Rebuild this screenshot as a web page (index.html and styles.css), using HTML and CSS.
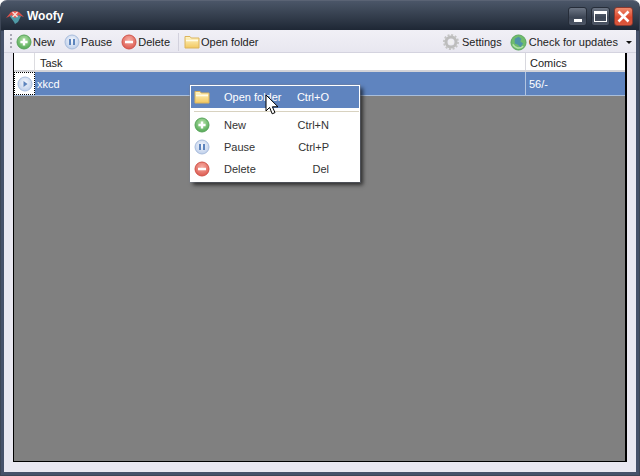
FILE: index.html
```html
<!DOCTYPE html>
<html>
<head>
<meta charset="utf-8">
<title>Woofy</title>
<link rel="stylesheet" href="styles.css">
</head>
<body>
<svg class="defs" width="0" height="0">
  <defs>
    <radialGradient id="gGreen" cx="50%" cy="35%" r="65%"><stop offset="0" stop-color="#b4e2a8"/><stop offset="1" stop-color="#52a854"/></radialGradient>
    <radialGradient id="gRed" cx="50%" cy="35%" r="65%"><stop offset="0" stop-color="#f7aea4"/><stop offset="1" stop-color="#dc5a50"/></radialGradient>
    <radialGradient id="gBlue" cx="50%" cy="40%" r="65%"><stop offset="0" stop-color="#f6f8fd"/><stop offset="1" stop-color="#b9cbe8"/></radialGradient>
    <linearGradient id="gFolder" x1="0" y1="0" x2="0" y2="1"><stop offset="0" stop-color="#fff6c8"/><stop offset="1" stop-color="#f2c860"/></linearGradient>
    <symbol id="new" viewBox="0 0 16 16"><circle cx="8" cy="8" r="7" fill="url(#gGreen)" stroke="#5aa55c"/><path d="M8 4.4v7.2M4.4 8h7.2" stroke="#fff" stroke-width="2.4"/></symbol>
    <symbol id="pause" viewBox="0 0 16 16"><circle cx="8" cy="8" r="7" fill="url(#gBlue)" stroke="#a8bcdc"/><path d="M6 5v6M10 5v6" stroke="#5d84bd" stroke-width="2"/></symbol>
    <symbol id="delete" viewBox="0 0 16 16"><circle cx="8" cy="8" r="7" fill="url(#gRed)" stroke="#d0544a"/><path d="M4 8h8" stroke="#fff" stroke-width="2.6"/></symbol>
    <symbol id="folder" viewBox="0 0 16 16"><path d="M1 2.5h5l1.2 1.5H15v10H1z" fill="url(#gFolder)" stroke="#dcb45c"/><path d="M2 6.5h12" stroke="#fffbe6" stroke-width="1.4"/></symbol>
  </defs>
</svg>
<div class="window">
  <header class="titlebar">
    <svg class="logo" width="18" height="17" viewBox="0 0 18 17">
      <path d="M3 7l5 7 1 2 3-2 3-6-6-2z" fill="#4f9aa6"/>
      <path d="M0 10l6-3 3 3 3-3 6 2-5-5-4-1-4 1z" fill="#d9504a"/>
      <circle cx="9" cy="6.5" r="3" fill="#e8615a"/>
      <path d="M6.5 4l5 5M11.5 4l-5 5" stroke="#f6e6e0" stroke-width="1.1"/>
    </svg>
    <span class="title">Woofy</span>
    <div class="caption">
      <span class="capbtn"><i class="min"></i></span>
      <span class="capbtn"><i class="max"></i></span>
      <span class="capbtn close"><svg width="13" height="13" viewBox="0 0 13 13"><path d="M1.5 1.5l10 10M11.5 1.5l-10 10" stroke="#fff" stroke-width="2.6"/></svg></span>
    </div>
  </header>
  <div class="client">
    <nav class="toolbar">
      <span class="grip"></span>
      <span class="tool t-new"><svg class="ico"><use href="#new"/></svg>New</span>
      <span class="tool t-pause"><svg class="ico"><use href="#pause"/></svg>Pause</span>
      <span class="tool t-del"><svg class="ico"><use href="#delete"/></svg>Delete</span>
      <span class="sep"></span>
      <span class="tool t-folder"><svg class="ico"><use href="#folder"/></svg>Open folder</span>
      <span class="spring"></span>
      <span class="tool t-set">
        <svg class="ico" viewBox="0 0 16 16"><circle cx="8" cy="8" r="5" fill="none" stroke="#bdbdbd" stroke-width="3"/><circle cx="8" cy="8" r="7" fill="none" stroke="#c4c4c4" stroke-width="2" stroke-dasharray="2 1.66"/><circle cx="8" cy="8" r="2.2" fill="#f0f0f0"/></svg>Settings</span>
      <span class="tool t-upd">
        <svg class="ico globe" viewBox="0 0 18 18"><circle cx="9" cy="9" r="8" fill="#6fbc6c" stroke="#5aa55c"/><path d="M5 5l4-2 3 2-1 3 3 2-3 4-3-3-3-1z" fill="#4f93a8"/><path d="M3 11a7 7 0 0 0 11 2" fill="none" stroke="#b4e2a8" stroke-width="1.6"/></svg>Check for updates</span>
      <span class="arrow"></span>
    </nav>
    <main class="grid">
      <div class="head">
        <span class="c-ico"></span>
        <span class="c-task">Task</span>
        <span class="c-comics">Comics</span>
      </div>
      <div class="row">
        <span class="c-ico focus"><svg width="16" height="16" viewBox="0 0 16 16"><circle cx="8" cy="8" r="7" fill="url(#gBlue)" stroke="#a9bedf"/><path d="M6.5 5l4 3-4 3z" fill="#5d84bd"/></svg></span>
        <span class="c-task">xkcd</span>
        <span class="c-comics">56/-</span>
      </div>
    </main>
  </div>
  <div class="menu">
    <div class="item active"><svg class="mico"><use href="#folder"/></svg><span class="label">Open folder</span><span class="key">Ctrl+O</span></div>
    <div class="rule"></div>
    <div class="item"><svg class="mico"><use href="#new"/></svg><span class="label">New</span><span class="key">Ctrl+N</span></div>
    <div class="item"><svg class="mico"><use href="#pause"/></svg><span class="label">Pause</span><span class="key">Ctrl+P</span></div>
    <div class="item"><svg class="mico"><use href="#delete"/></svg><span class="label">Delete</span><span class="key">Del</span></div>
  </div>
  <svg class="cursor" width="14" height="21" viewBox="0 0 14 21"><path d="M1 1v16l3.6-3.6 2.6 6.4 2.8-1.2-2.6-5.8H13z" fill="#fff" stroke="#000"/></svg>
</div>
</body>
</html>
```
FILE: styles.css
```css
html, body { margin: 0; padding: 0; background: #fff; }
.defs { position: absolute; }
.window {
  position: relative;
  width: 640px;
  height: 476px;
  box-sizing: border-box;
  display: flex;
  flex-direction: column;
  overflow: hidden;
  border-radius: 7px 7px 0 0;
  border: 1px solid #3d4656;
  border-top-color: #5a6374;
  padding: 0 3px 3px;
  background: linear-gradient(#4b5668 0, #36404f 14px, #1e2735 29px, #46526a 30px, #46526a 100%);
  font: 11px "Liberation Sans", Arial, sans-serif;
  color: #222;
}
.titlebar {
  height: 29px;
  flex: none;
  display: flex;
  align-items: center;
  gap: 3px;
}
.logo { margin-left: 2px; margin-top: 1px; }
.title { color: #fff; font-weight: bold; font-size: 12px; }
.caption { margin-left: auto; display: flex; gap: 4px; margin-top: 2px; margin-right: 3px; }
.capbtn {
  width: 19px;
  height: 19px;
  box-sizing: border-box;
  border: 1px solid #262d39;
  border-radius: 3px;
  background: linear-gradient(#6c7584, #3d4655 55%, #4e5767);
  display: flex;
  align-items: center;
  justify-content: center;
}
.capbtn i { display: block; box-sizing: border-box; }
.min { width: 8px; height: 3px; background: #fff; margin-top: 7px; }
.max { width: 13px; height: 11px; border: 1px solid #fff; border-top-width: 3px; }
.close { background: linear-gradient(#f08a6c, #dc4a30 55%, #d9583e); border-color: #8a3a30; }
.client {
  flex: 1;
  display: flex;
  flex-direction: column;
  background: #e9e8f1;
  padding: 0 9px 10px;
  min-height: 0;
}
.toolbar {
  height: 23px;
  flex: none;
  margin: 0 -9px;
  padding: 2px 0 0 6px;
  display: flex;
  align-items: center;
  background: linear-gradient(#f1f0f6, #e8e7f0);
  border-bottom: 1px solid #d4d3df;
  box-sizing: border-box;
}
.grip {
  width: 2px;
  height: 16px;
  margin-right: 4px;
  background: repeating-linear-gradient(#a8a8b4 0 2px, transparent 2px 4px);
}
.tool { display: flex; align-items: center; gap: 1px; white-space: nowrap; }
.ico { width: 16px; height: 16px; }
.globe { width: 17px; height: 17px; }
.t-pause, .t-del { margin-left: 9px; }
.sep { width: 1px; height: 18px; background: #d2d1dd; margin: 0 5px 0 8px; }
.spring { flex: 1; }
.t-set { gap: 3px; }
.t-upd { margin-left: 8px; gap: 2px; }
.arrow {
  width: 0; height: 0;
  border: 3px solid transparent;
  border-top: 3px solid #111;
  border-bottom: 0;
  margin: 0 4px 0 8px;
}
.grid {
  flex: 1;
  background: #808080;
  border: 1px solid #000;
  border-top: 0;
  border-right: 2px solid #000;
  min-height: 0;
}
.head {
  height: 19px;
  box-sizing: border-box;
  display: flex;
  background: #fff;
  border-bottom: 2px solid #d3d3d8;
  line-height: 21px;
}
.c-ico { width: 21px; flex: none; box-sizing: border-box; }
.head .c-ico { border-right: 1px solid #dcdce0; }
.c-task { flex: 1; padding-left: 5px; }
.c-comics { width: 100px; flex: none; border-left: 1px solid #d8d8de; padding-left: 4px; box-sizing: border-box; }
.row {
  height: 24px;
  display: flex;
  align-items: center;
  background: #5f84bf;
  color: #fff;
  border-bottom: 1px solid #a9bedb;
  box-sizing: border-box;
}
.row .c-task { padding-left: 2px; }
.row .c-comics { align-self: stretch; display: flex; align-items: center; border-left-color: #b3c5e0; padding-left: 3px; }
.focus {
  align-self: stretch;
  display: flex;
  align-items: center;
  justify-content: center;
  background: #fff;
  outline: 1px dotted #000;
  outline-offset: -1px;
}
.menu {
  position: absolute;
  left: 189px;
  top: 84px;
  width: 170px;
  height: 97px;
  box-sizing: border-box;
  background: #fff;
  border: 1px solid #fff;
  box-shadow: 0 0 0 1px rgba(120,130,150,.35), 3px 3px 4px rgba(0,0,0,.65);
  color: #333;
}
.item {
  height: 22px;
  display: flex;
  align-items: center;
  padding-left: 3px;
  position: relative;
}
.item.active { background: #5f84bf; color: #fff; }
.mico { width: 16px; height: 16px; }
.label { margin-left: 14px; }
.key { position: absolute; right: 30px; }
.rule { height: 1px; margin: 3px 0 2px 3px; background: #d8d2c0; }
.cursor { position: absolute; left: 264px; top: 93px; }
```
